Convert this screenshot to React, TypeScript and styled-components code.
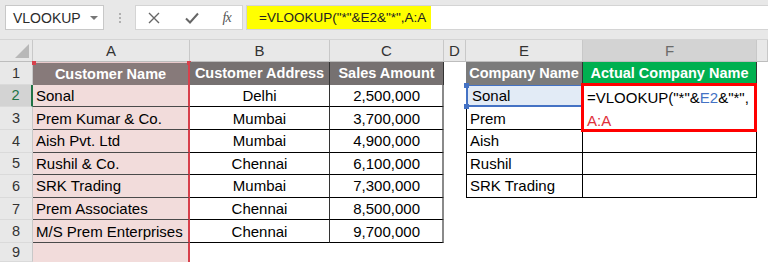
import React from "react";
import styled, { createGlobalStyle } from "styled-components";

const GlobalStyle = createGlobalStyle`
	html, body {
		margin: 0;
		padding: 0;
		background: #fff;
		overflow: hidden;
	}
	body {
		font-family: "Liberation Sans", Arial, sans-serif;
	}
`;

const Page = styled.div`
	width: 768px;
	height: 262px;
	overflow: hidden;
	background: #fff;
`;

const FormulaBar = styled.div`
	display: flex;
	align-items: flex-start;
	height: 40px;
	padding: 5px 0 0 5px;
	box-sizing: border-box;
	background: #e8e8e8;
	border-bottom: 1px solid #d4d4d4;
`;

const NameBox = styled.div`
	display: flex;
	align-items: center;
	justify-content: space-between;
	width: 99px;
	height: 25px;
	padding: 0 5px 0 7px;
	box-sizing: border-box;
	background: #fff;
	border: 1px solid #c8c8c8;
	font-size: 14px;
	color: #2b2b2b;
`;

const Caret = styled.span`
	width: 0;
	height: 0;
	border-left: 4px solid transparent;
	border-right: 4px solid transparent;
	border-top: 4px solid #777;
`;

const Grip = styled.div`
	display: flex;
	flex-direction: column;
	align-items: center;
	justify-content: center;
	gap: 2px;
	width: 31px;
	height: 25px;

	span {
		width: 2px;
		height: 2px;
		background: #b0b0b0;
	}
`;

const ButtonBox = styled.div`
	display: flex;
	align-items: center;
	justify-content: space-around;
	width: 108px;
	height: 25px;
	box-sizing: border-box;
	background: #fff;
	border: 1px solid #d4d4d4;
	margin-right: 3px;
`;

const FxLabel = styled.span`
	font-family: "Liberation Serif", "Times New Roman", serif;
	font-style: italic;
	font-size: 14px;
	color: #555;
	letter-spacing: -1px;
`;

const FormulaInput = styled.div`
	flex: 1;
	display: flex;
	align-items: stretch;
	height: 25px;
	box-sizing: border-box;
	background: #fff;
	border: 1px solid #d4d4d4;
	border-right: none;
`;

const Highlight = styled.span`
	display: flex;
	align-items: center;
	padding: 0 5px 0 12px;
	background: #ffff00;
	font-size: 13.5px;
	color: #222;
	white-space: nowrap;
`;

const Sheet = styled.div`
	display: grid;
	grid-template-columns: 33px 157px 140px 114px 22px 117px 174px 1fr;
	grid-template-rows: 22px repeat(8, 22.625px) 1fr;
	height: 222px;
`;

const ColHead = styled.div<{ $selected?: boolean }>`
	display: flex;
	align-items: center;
	justify-content: center;
	box-sizing: border-box;
	background: ${({ $selected }) => ($selected ? "#d3d3d3" : "#e8e8e8")};
	border-right: 1px solid #c8c8c8;
	border-bottom: 1px solid #bdbdbd;
	font-size: 15px;
	color: ${({ $selected }) => ($selected ? "#6b6b6b" : "#333")};
`;

const Corner = styled.div`
	position: relative;
	background: #e8e8e8;
	border-right: 1px solid #c8c8c8;
	border-bottom: 1px solid #bdbdbd;

	&::after {
		content: "";
		position: absolute;
		right: 3px;
		bottom: 3px;
		width: 14px;
		height: 14px;
		background: #b8b8b8;
		clip-path: polygon(100% 0, 100% 100%, 0 100%);
	}
`;

const RowHead = styled.div<{ $selected?: boolean }>`
	display: flex;
	align-items: center;
	justify-content: center;
	box-sizing: border-box;
	background: ${({ $selected }) => ($selected ? "#d3d3d3" : "#e8e8e8")};
	border-right: ${({ $selected }) => ($selected ? "2px solid #217346" : "1px solid #c8c8c8")};
	border-bottom: 1px solid #dadada;
	font-size: 14.5px;
	color: ${({ $selected }) => ($selected ? "#217346" : "#333")};
`;

const HeadCell = styled.div<{ $bg: string; $ref?: boolean }>`
	position: relative;
	display: flex;
	align-items: center;
	justify-content: center;
	box-sizing: border-box;
	background: ${({ $bg }) => $bg};
	color: #fff;
	font-weight: bold;
	font-size: 14.5px;
	white-space: nowrap;
	border-right: ${({ $ref }) => ($ref ? "2px solid #d8404c" : "1px solid #333")};
	border-top: ${({ $ref }) => ($ref ? "1px solid #e9c9cb" : "none")};

	${({ $ref }) =>
		$ref &&
		`
		&::before, &::after {
			content: "";
			position: absolute;
			top: -2px;
			width: 4px;
			height: 4px;
			background: #d8404c;
		}
		&::before { left: -1px; }
		&::after { right: -3px; }
	`}
`;

const Cell = styled.div<{ $align?: string; $pink?: boolean; $ref?: boolean; $lines?: string }>`
	display: flex;
	align-items: center;
	justify-content: ${({ $align }) => $align || "flex-start"};
	box-sizing: border-box;
	padding: ${({ $align }) => ($align === "flex-end" ? "0 22px 0 0" : "0 3px")};
	background: ${({ $pink }) => ($pink ? "#f2dcdb" : "#fff")};
	font-size: 15px;
	color: #000;
	white-space: nowrap;
	border-right: ${({ $ref }) => ($ref ? "2px solid #d8404c" : "none")};
	${({ $lines }) => $lines || ""}
`;

const SelectedRef = styled(Cell)`
	position: relative;
	background: #e2ebf6;
	border-left: 2px solid #4472c4;
	border-bottom: 2px solid #4472c4;
	border-top: 1px solid #4472c4;
	border-right: 1px solid #000;
	padding-left: 4px;

	&::before, &::after {
		content: "";
		position: absolute;
		left: -4px;
		width: 5px;
		height: 5px;
		background: #4472c4;
	}
	&::before { top: -3px; }
	&::after { bottom: -4px; }
`;

const EditCell = styled.div`
	grid-row: span 2;
	position: relative;
	z-index: 1;
	margin: -2px 0 -2px -2px;
	box-sizing: border-box;
	padding: 0 0 0 3px;
	background: #fff;
	border: 3px solid #ff0000;
	font-size: 15px;
	line-height: 23px;
	color: #000;
	white-space: nowrap;
`;

const Ref = styled.span<{ $color: string }>`
	color: ${({ $color }) => $color};
`;

const customers = [
	["Sonal", "Delhi", "2,500,000"],
	["Prem Kumar & Co.", "Mumbai", "3,700,000"],
	["Aish Pvt. Ltd", "Mumbai", "4,900,000"],
	["Rushil & Co.", "Chennai", "6,100,000"],
	["SRK Trading", "Mumbai", "7,300,000"],
	["Prem Associates", "Chennai", "8,500,000"],
	["M/S Prem Enterprises", "Chennai", "9,700,000"]
];

const companies = ["Sonal", "Prem", "Aish", "Rushil", "SRK Trading"];

const lineA = "border-bottom: 1px solid #4a4a4a;";
const lineBC = "border-bottom: 1px solid #000; border-right: 1px solid #333;";
const lineC = "border-bottom: 1px solid #000; border-right: 2px solid #8a8a8a;";
const lineE = "border-left: 1px solid #000; border-right: 1px solid #000; border-bottom: 1px solid #000;";
const lineF = "border-right: 1px solid #000; border-bottom: 1px solid #000;";

const CloseIcon = () => (
	<svg width="14" height="14" viewBox="0 0 14 14">
		<path d="M2 2 L12 12 M12 2 L2 12" stroke="#666" strokeWidth="1.4" fill="none" />
	</svg>
);

const CheckIcon = () => (
	<svg width="16" height="14" viewBox="0 0 16 14">
		<path d="M2 7.5 L6 11.5 L14 2.5" stroke="#666" strokeWidth="2" fill="none" />
	</svg>
);

const App = () => {
	const columns = ["A", "B", "C", "D", "E", "F"];

	return (
		<Page>
			<GlobalStyle />
			<FormulaBar>
				<NameBox>
					VLOOKUP
					<Caret />
				</NameBox>
				<Grip>
					<span />
					<span />
					<span />
				</Grip>
				<ButtonBox>
					<CloseIcon />
					<CheckIcon />
					<FxLabel>fx</FxLabel>
				</ButtonBox>
				<FormulaInput>
					<Highlight>=VLOOKUP("*"&amp;E2&amp;"*",A:A</Highlight>
				</FormulaInput>
			</FormulaBar>
			<Sheet>
				<Corner />
				{columns.map((col) => (
					<ColHead key={col} $selected={col === "F"}>
						{col}
					</ColHead>
				))}
				<ColHead />

				<RowHead>1</RowHead>
				<HeadCell $bg="#877a7a" $ref>
					Customer Name
				</HeadCell>
				<HeadCell $bg="#767171">Customer Address</HeadCell>
				<HeadCell $bg="#767171">Sales Amount</HeadCell>
				<Cell />
				<HeadCell $bg="#7b7b7b">Company Name</HeadCell>
				<HeadCell $bg="#00b050">Actual Company Name</HeadCell>
				<Cell />

				{customers.map(([name, city, amount], i) => {
					const row = i + 2;
					const company = companies[i];
					return (
						<React.Fragment key={row}>
							<RowHead $selected={row === 2}>{row}</RowHead>
							<Cell $pink $ref $lines={lineA}>
								{name}
							</Cell>
							<Cell $align="center" $lines={lineBC}>
								{city}
							</Cell>
							<Cell $align="flex-end" $lines={lineC}>
								{amount}
							</Cell>
							<Cell />
							{row === 2 ? (
								<SelectedRef>{company}</SelectedRef>
							) : company ? (
								<Cell $lines={lineE}>{company}</Cell>
							) : (
								<Cell />
							)}
							{row === 2 && (
								<EditCell>
									=VLOOKUP("*"&amp;<Ref $color="#4472c4">E2</Ref>&amp;"*",
									<br />
									<Ref $color="#e0303a">A:A</Ref>
								</EditCell>
							)}
							{row > 3 && <Cell $lines={company ? lineF : ""} />}
							<Cell />
						</React.Fragment>
					);
				})}

				<RowHead>9</RowHead>
				<Cell $pink $ref />
			</Sheet>
		</Page>
	);
};

export default App;
